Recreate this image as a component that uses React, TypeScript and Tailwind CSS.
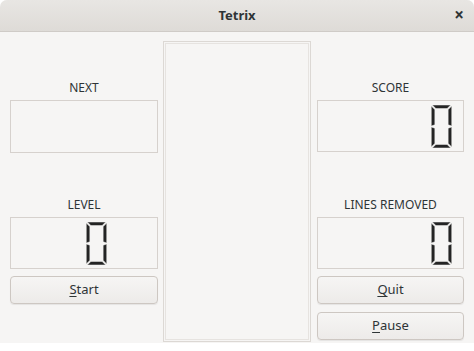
import React from 'react';

function LcdZero() {
  return (
    <svg width="21" height="43" viewBox="0 0 20 42" className="block">
      <g fill="#242424" stroke="#f6f5f4" strokeWidth="0.5">
        <polygon points="1,0 19,0 15.5,3.5 4.5,3.5" />
        <polygon points="4.5,38.5 15.5,38.5 19,42 1,42" />
        <polygon points="0,1 3.5,4.5 3.5,19.3 0,20.6" />
        <polygon points="0,21.4 3.5,22.7 3.5,37.5 0,41" />
        <polygon points="20,1 20,20.6 16.5,19.3 16.5,4.5" />
        <polygon points="20,21.4 20,41 16.5,37.5 16.5,22.7" />
      </g>
    </svg>
  );
}

function Label({ text, className = '' }: { text: string; className?: string }) {
  return (
    <div className={`h-[14px] text-center text-[12px] leading-[14px] text-[#2e3436] ${className}`}>
      {text}
    </div>
  );
}

function Lcd({ className = '' }: { className?: string }) {
  return (
    <div className={`flex h-[52px] items-center justify-end border border-[#d6d1cd] ${className}`}>
      <LcdZero />
    </div>
  );
}

function Button({ mnemonic, rest, className = '' }: { mnemonic: string; rest: string; className?: string }) {
  return (
    <div
      className={`flex h-[28px] items-center justify-center rounded-[4px] border border-[#cdc7c2] bg-gradient-to-b from-[#f6f5f4] to-[#edebe9] text-[13px] text-[#2e3436] shadow-[0_1px_1px_rgba(0,0,0,0.07)] ${className}`}
    >
      <span>
        <span className="underline underline-offset-2">{mnemonic}</span>
        {rest}
      </span>
    </div>
  );
}

export default function App() {
  return (
    <div className="h-[351px] w-[474px] bg-white" style={{ fontFamily: '"Noto Sans", "DejaVu Sans", sans-serif' }}>
      <div className="h-[343px] w-[474px] overflow-hidden rounded-t-[7px] bg-[#f6f5f4]">
        <div className="relative flex h-[32px] items-center justify-center border-b border-[#cfcbc7] bg-gradient-to-b from-[#e8e6e3] to-[#dedbd7]">
          <span className="text-[13px] font-bold text-[#2e3436]">Tetrix</span>
          <span className="absolute right-[10px] top-[5px] text-[17px] leading-[20px] font-bold text-[#2e3436]">×</span>
        </div>

        <div className="flex px-[10px] pt-[9px]">
          <div className="flex w-[148px] flex-col">
            <Label text="NEXT" className="mt-[40px]" />
            <div className="mt-[5px] h-[53px] border border-[#d6d1cd]" />
            <Label text="LEVEL" className="mt-[45px]" />
            <Lcd className="mt-[5px] pr-[50px]" />
            <Button mnemonic="S" rest="tart" className="mt-[7px]" />
          </div>

          <div className="ml-[5px] h-[301px] w-[148px] border border-[#dcd8d4] p-[1px]">
            <div className="h-full w-full border border-[#e6e3e0]" />
          </div>

          <div className="ml-[6px] flex w-[147px] flex-col">
            <Label text="SCORE" className="mt-[40px]" />
            <Lcd className="mt-[5px] pr-[11px]" />
            <Label text="LINES REMOVED" className="mt-[46px]" />
            <Lcd className="mt-[5px] pr-[11px]" />
            <Button mnemonic="Q" rest="uit" className="mt-[7px]" />
            <Button mnemonic="P" rest="ause" className="mt-[8px]" />
          </div>
        </div>
      </div>
    </div>
  );
}
